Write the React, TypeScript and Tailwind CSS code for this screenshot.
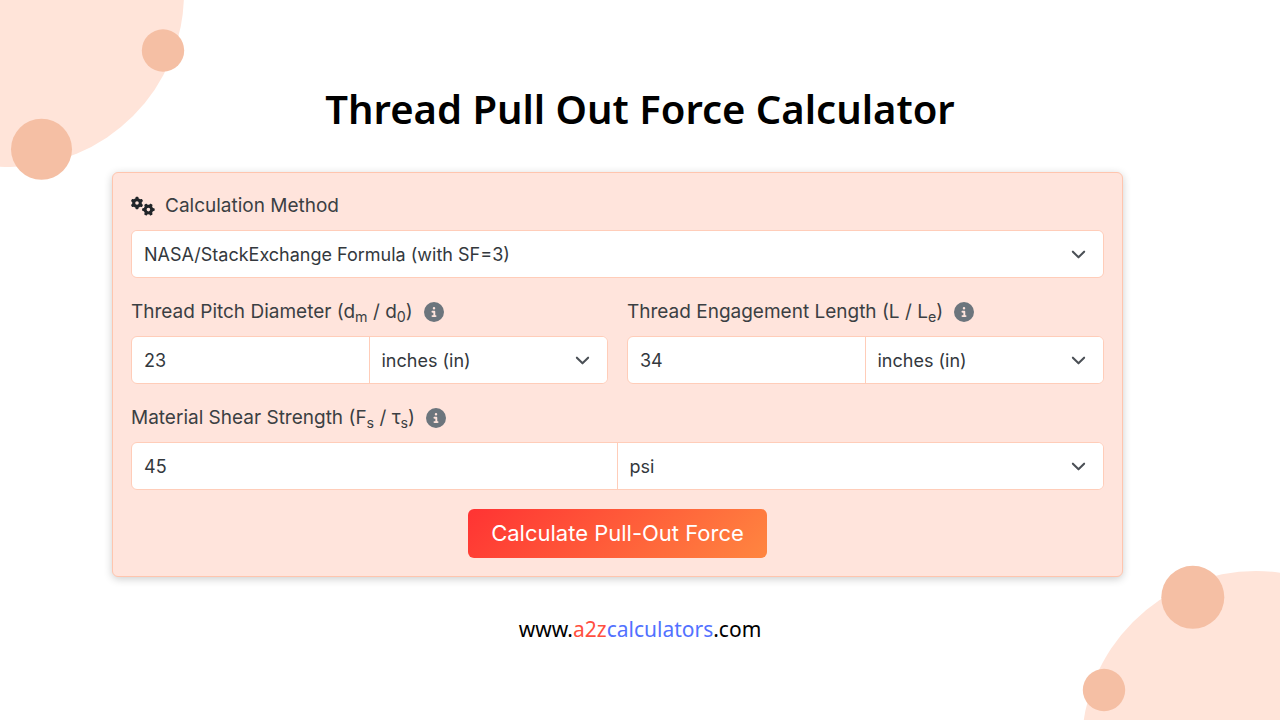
import * as React from "react";
import { FaCircleInfo, FaGears } from "react-icons/fa6";

function Field({
  id,
  label,
  children,
}: {
  id: string;
  label: React.ReactNode;
  children: React.ReactNode;
}) {
  return (
    <div className="flex min-w-0 flex-col gap-[9px]">
      <div className="flex h-[30px] items-center gap-[11px]">
        <label
          htmlFor={id}
          className="flex items-center gap-[10px] whitespace-nowrap text-[19px] leading-[30px] text-[#3b3f43]"
        >
          {label}
        </label>
        {id !== "method" && (
          <button
            type="button"
            aria-label="More information"
            className="text-[#6c757d]"
          >
            <FaCircleInfo size={20} />
          </button>
        )}
      </div>
      {children}
    </div>
  );
}

function Select({
  id,
  label,
  options,
}: {
  id: string;
  label?: string;
  options: string[];
}) {
  return (
    <div className="grid h-full min-w-0 flex-1 items-center bg-white">
      <select
        id={id}
        aria-label={label}
        className="col-start-1 row-start-1 h-full w-full appearance-none bg-transparent pr-10 pl-3 text-[18px] text-[#33383d] outline-none"
      >
        {options.map((option) => (
          <option key={option}>{option}</option>
        ))}
      </select>
      <svg
        viewBox="0 0 16 16"
        fill="none"
        stroke="#4b5056"
        strokeWidth="2.2"
        strokeLinecap="round"
        strokeLinejoin="round"
        className="pointer-events-none col-start-1 row-start-1 mr-[17px] size-[15px] justify-self-end"
      >
        <path d="m2 5 6 6 6-6" />
      </svg>
    </div>
  );
}

function InputGroup({
  id,
  value,
  units,
}: {
  id: string;
  value: string;
  units: string[];
}) {
  return (
    <div className="grid h-12 grid-cols-2 divide-x divide-[#ffcdb9] overflow-hidden rounded-md border border-[#ffcdb9] bg-white">
      <div className="min-w-0">
        <input
          id={id}
          type="text"
          inputMode="decimal"
          defaultValue={value}
          className="h-full w-full px-3 text-[18px] text-[#33383d] outline-none"
        />
      </div>
      <Select id={`${id}-unit`} label="Unit" options={units} />
    </div>
  );
}

function CornerBlobs() {
  return (
    <>
      <svg
        aria-hidden="true"
        viewBox="0 0 190 190"
        className="absolute top-0 left-0 size-[190px]"
      >
        <circle cx="10" cy="-7" r="174" fill="#ffe4d9" />
        <circle cx="163" cy="50.5" r="21.2" fill="#f5bfa4" />
        <circle cx="41.5" cy="149.2" r="30.5" fill="#f5bfa4" />
      </svg>
      <svg
        aria-hidden="true"
        viewBox="0 0 200 160"
        className="absolute right-0 bottom-0 h-[160px] w-[200px]"
      >
        <circle cx="176" cy="185" r="174" fill="#ffe4d9" />
        <circle cx="112.8" cy="37.3" r="31.5" fill="#f5bfa4" />
        <circle cx="24" cy="130" r="21.2" fill="#f5bfa4" />
      </svg>
    </>
  );
}

export default function App() {
  return (
    <div className="relative flex min-h-screen flex-col gap-[34px] overflow-hidden bg-white pt-20 font-['Inter',sans-serif]">
      <CornerBlobs />
      <h1 className="relative text-center font-['Noto_Sans',sans-serif] text-[40px] leading-[58px] font-semibold text-black">
        Thread Pull Out Force Calculator
      </h1>

      <main className="relative pr-[157px] pl-28">
        <form
          onSubmit={(e) => e.preventDefault()}
          className="flex flex-col gap-[19px] rounded-md border border-[#ffc5ae] bg-[#ffe4dc] p-[18px] shadow-[0_2px_8px_rgba(0,0,0,0.2)]"
        >
          <Field
            id="method"
            label={
              <>
                <FaGears size={24} className="text-[#212529]" />
                Calculation Method
              </>
            }
          >
            <div className="flex h-12 overflow-hidden rounded-md border border-[#ffcdb9]">
              <Select
                id="method"
                options={["NASA/StackExchange Formula (with SF=3)"]}
              />
            </div>
          </Field>

          <div className="grid grid-cols-2 gap-[19px]">
            <Field
              id="diameter"
              label={
                <span>
                  Thread Pitch Diameter (d<sub>m</sub> / d<sub>0</sub>)
                </span>
              }
            >
              <InputGroup id="diameter" value="23" units={["inches (in)"]} />
            </Field>
            <Field
              id="length"
              label={
                <span>
                  Thread Engagement Length (L / L<sub>e</sub>)
                </span>
              }
            >
              <InputGroup id="length" value="34" units={["inches (in)"]} />
            </Field>
          </div>

          <Field
            id="strength"
            label={
              <span>
                Material Shear Strength (F<sub>s</sub> / τ<sub>s</sub>)
              </span>
            }
          >
            <InputGroup id="strength" value="45" units={["psi"]} />
          </Field>

          <button
            type="submit"
            className="h-[49px] self-center rounded-md bg-[linear-gradient(135deg,#ff3333,#ff8640)] px-[23px] text-[22px] text-white"
          >
            Calculate Pull-Out Force
          </button>
        </form>
      </main>

      <footer className="relative text-center font-['Noto_Sans',sans-serif] text-[21px] leading-9 text-black">
        <a href="#">
          www.<span className="text-[#ff4f40]">a2z</span>
          <span className="text-[#5271ff]">calculators</span>.com
        </a>
      </footer>
    </div>
  );
}
